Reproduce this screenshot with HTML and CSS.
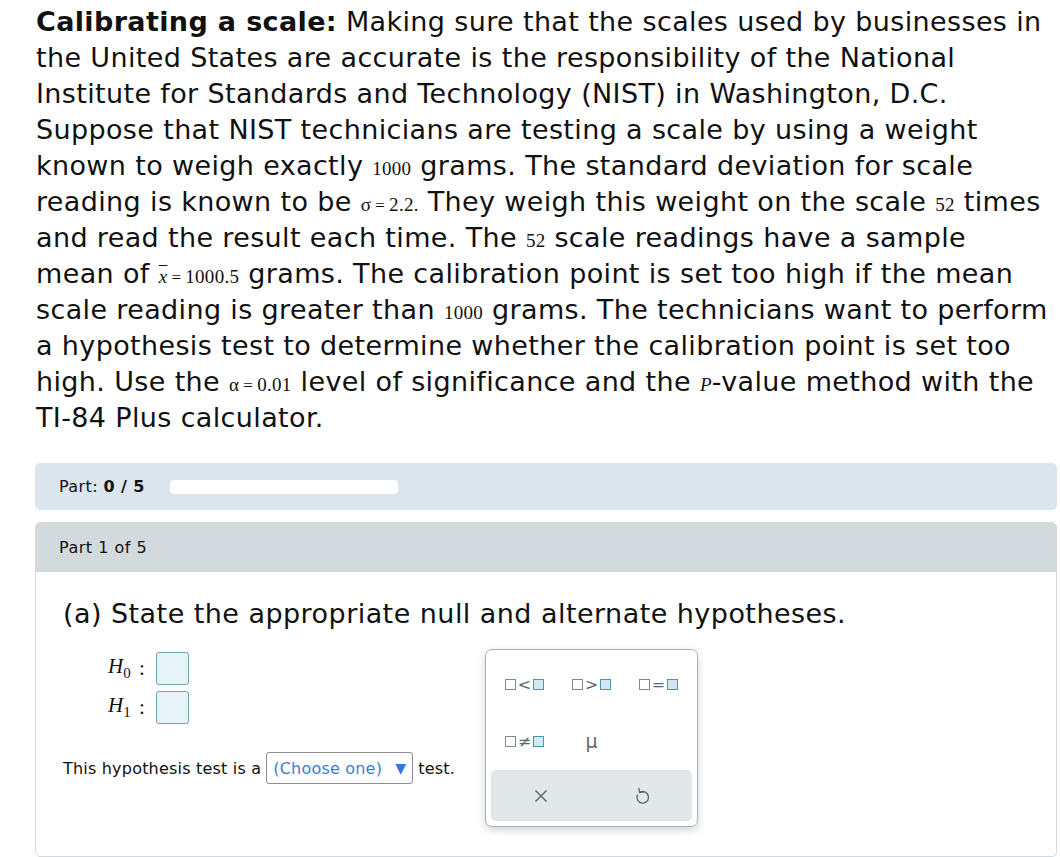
FILE: index.html
```html
<!DOCTYPE html>
<html>
<head>
<meta charset="utf-8">
<link rel="stylesheet" href="styles.css">
</head>
<body>
<div class="page">
  <p class="problem"><b>Calibrating a scale:</b> Making sure that the scales used by businesses in<br>the United States are accurate is the responsibility of the National<br>Institute for Standards and Technology (NIST) in Washington, D.C.<br>Suppose that NIST technicians are testing a scale by using a weight<br>known to weigh exactly <span class="m">1000</span> grams. The standard deviation for scale<br>reading is known to be <span class="m">σ<span class="op">=</span>2.2.</span> They weigh this weight on the scale <span class="m">52</span> times<br>and read the result each time. The <span class="m">52</span> scale readings have a sample<br>mean of <span class="m"><i class="xbar">x</i><span class="op">=</span>1000.5</span> grams. The calibration point is set too high if the mean<br>scale reading is greater than <span class="m">1000</span> grams. The technicians want to perform<br>a hypothesis test to determine whether the calibration point is set too<br>high. Use the <span class="m">α<span class="op">=</span>0.01</span> level of significance and the <span class="m"><i>P</i></span>-value method with the<br>TI-84 Plus calculator.</p>

  <div class="part-bar">
    <span class="part-label">Part: <b>0 / 5</b></span>
    <div class="progress"></div>
  </div>

  <div class="panel">
    <div class="panel-head">Part 1 of 5</div>
    <div class="panel-body">
      <div class="question">(a) State the appropriate null and alternate hypotheses.</div>
      <div class="work">
        <div class="left">
          <div class="hyps">
            <div class="hyp"><span class="hl"><i>H</i><sub>0</sub></span><span class="colon">:</span><span class="ansbox"></span></div>
            <div class="hyp"><span class="hl"><i>H</i><sub>1</sub></span><span class="colon">:</span><span class="ansbox"></span></div>
          </div>
          <div class="testline">
            <span>This hypothesis test is a</span>
            <span class="select"><span>(Choose one)</span><span class="tri">▼</span></span>
            <span>test.</span>
          </div>
        </div>
        <div class="keypad">
          <div class="keys">
            <span class="key"><span class="sq g"></span><span class="opk">&lt;</span><span class="sq b"></span></span>
            <span class="key"><span class="sq g"></span><span class="opk">&gt;</span><span class="sq b"></span></span>
            <span class="key"><span class="sq g"></span><span class="opk">=</span><span class="sq b"></span></span>
            <span class="key"><span class="sq g"></span><span class="opk">≠</span><span class="sq b"></span></span>
            <span class="key mu">μ</span>
            <span class="key"></span>
          </div>
          <div class="actions">
            <span class="act">
              <svg width="16" height="16" viewBox="0 0 16 16"><path d="M2.5 2.5 L13.5 13.5 M13.5 2.5 L2.5 13.5" stroke="#5b6a70" stroke-width="1.5" fill="none"/></svg>
            </span>
            <span class="act">
              <svg width="16" height="20" viewBox="0 0 16 20"><path d="M5.5 6.5 A5.8 5.8 0 1 1 3.6 8.6" stroke="#5b6a70" stroke-width="1.4" fill="none"/><path d="M5 2.5 L5.5 6.5 L9.3 6" stroke="#5b6a70" stroke-width="1.4" fill="none" stroke-linejoin="round" stroke-linecap="round"/></svg>
            </span>
          </div>
        </div>
      </div>
    </div>
  </div>
</div>
</body>
</html>
```
FILE: styles.css
```css
html, body { margin: 0; padding: 0; background: #fff; }
body { font-family: "DejaVu Sans", Verdana, sans-serif; color: #111; }
.page { width: 1060px; }
.problem {
  margin: 4px 0 0 0;
  padding: 0 0 0 36px;
  font-size: 27px;
  letter-spacing: 0.36px;
  line-height: 36px;
  white-space: nowrap;
}
.m { font-family: "Liberation Serif", "Times New Roman", serif; font-size: 19px; line-height: 1; letter-spacing: 0.3px; }
.m .op { font-size: 17px; margin: 0 4px; }
.xbar { text-decoration: overline; }
.part-bar {
  margin: 27px 3px 0 35px;
  height: 47px;
  background: #dce6ee;
  border-radius: 5px;
  display: flex;
  align-items: center;
  padding-left: 24px;
  font-size: 16px;
  letter-spacing: 0.4px;
}
.part-label { width: 111px; }
.progress { width: 228px; height: 14px; background: #fff; border-radius: 4px; }
.panel {
  margin: 12px 3px 0 35px;
  border: 1px solid #d3d9dc;
  border-radius: 5px;
  overflow: hidden;
}
.panel-head {
  height: 49px;
  background: #d2dadd;
  display: flex;
  align-items: center;
  padding-left: 23px;
  font-size: 16px;
  letter-spacing: 0.5px;
}
.panel-body { padding: 24px 0 29px 27px; }
.question { font-size: 27px; line-height: 36px; letter-spacing: 0.45px; }
.work { display: flex; margin-top: 17px; }
.left { width: 422px; padding-top: 2px; }
.hyps { display: flex; flex-direction: column; gap: 5px; padding-left: 45px; }
.hyp { display: flex; align-items: center; height: 34px; font-family: "Liberation Serif", serif; font-size: 21px; }
.hl { width: 31px; }
.hl sub { font-size: 15px; font-style: normal; }
.colon { width: 17px; }
.ansbox {
  width: 31px; height: 31px;
  border: 1.5px solid #6fa3ad;
  background: #e7f3f7;
  border-radius: 3px;
}
.testline {
  margin-top: 28px;
  display: flex;
  align-items: center;
  gap: 5px;
  font-size: 16px;
  letter-spacing: 0.2px;
}
.select {
  display: inline-flex;
  align-items: center;
  justify-content: space-between;
  width: 133px;
  height: 30px;
  padding: 0 6px;
  border: 1px solid #8d8d8d;
  border-radius: 3px;
  color: #3b7ed8;
}
.tri { font-size: 14px; color: #2f77dd; }
.keypad {
  width: 213px;
  height: 178px;
  border: 1px solid #a8b2b6;
  border-radius: 7px;
  box-shadow: 0 3px 8px rgba(0,0,0,0.18);
  padding: 0 5px 5px 5px;
  box-sizing: border-box;
  display: flex;
  flex-direction: column;
  background: #fff;
}
.keys {
  flex: 1;
  display: grid;
  grid-template-columns: repeat(3, 1fr);
  grid-template-rows: 60px 54px;
  padding-top: 4px;
}
.key { display: flex; align-items: center; justify-content: center; gap: 1px; }
.sq { display: inline-block; width: 9px; height: 9px; }
.sq.g { border: 1.5px solid #7b8a8f; }
.sq.b { border: 1.5px solid #4a96aa; background: #cfe8f1; }
.opk { font-size: 16px; color: #5b6a70; width: 15px; text-align: center; }
.key.mu { font-size: 19px; color: #5b6a70; font-family: "DejaVu Sans", sans-serif; }
.actions {
  height: 51px;
  background: #e2e7ea;
  border-radius: 5px;
  display: flex;
  align-items: center;
}
.act { flex: 1; display: flex; justify-content: center; }
```
